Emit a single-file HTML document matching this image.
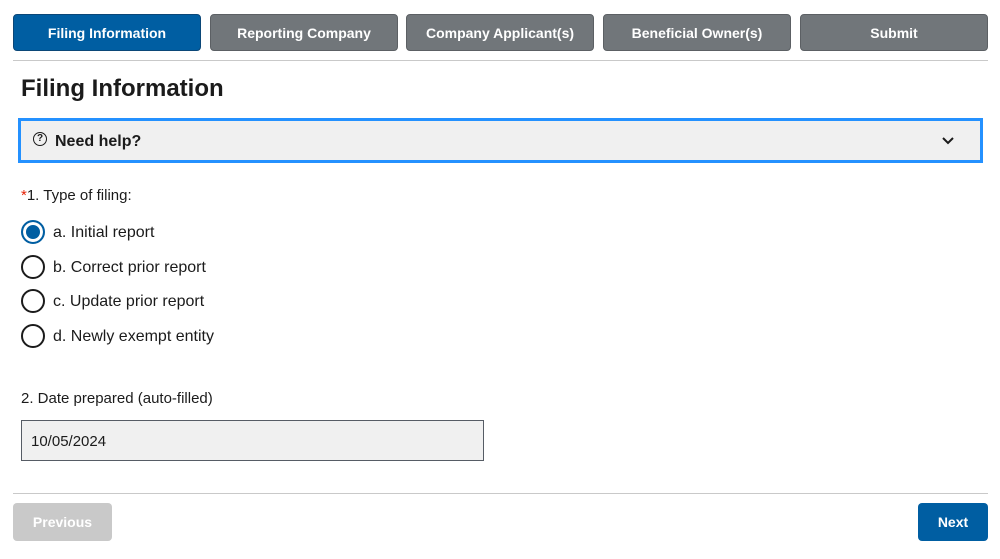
<!DOCTYPE html>
<html><head><style>
*{box-sizing:border-box;margin:0;padding:0}
body{width:1000px;height:559px;background:#fff;font-family:"Liberation Sans",sans-serif;color:#1b1b1b;position:relative;overflow:hidden}
.tab{position:absolute;top:14px;height:37px;border-radius:4px;background:#71767a;color:#fff;font-weight:bold;font-size:14px;display:flex;align-items:center;justify-content:center;border:1px solid #5c6064}
.tab.on{background:#005ea2;border-color:#0b4778}
.hr{position:absolute;left:13px;width:975px;height:1px;background:#c9c9c9}
h1{position:absolute;left:21px;top:75px;font-size:24px;font-weight:bold}
.help{position:absolute;left:18px;top:118px;width:965px;height:45px;border:3px solid #2491ff;background:#f0f0f0;font-weight:bold;font-size:16px;display:flex;align-items:center;padding-left:34px;padding-top:3px}
.q{position:absolute;left:12px;top:11px;width:14px;height:14px;border:1.5px solid #1b1b1b;border-radius:50%;font-size:10px;text-align:center;line-height:11px}
.lbl{position:absolute;left:21px;font-size:15px}
.r{position:absolute;left:21px;width:24px;height:24px;border:2px solid #1b1b1b;border-radius:50%}
.r.on{border-color:#005ea2;box-shadow:inset 0 0 0 3px #fff;background:#005ea2}
.opt{position:absolute;left:53px;font-size:16px}
.inp{position:absolute;left:21px;top:420px;width:463px;height:41px;border:1px solid #565c65;background:#f0f0f0;font-size:15px;padding:12px 9px}
.btn{position:absolute;top:503px;height:38px;border-radius:4px;font-weight:bold;font-size:14px;color:#fff;display:flex;align-items:center;justify-content:center}
</style></head><body>
<div class="tab on" style="left:13px;width:188px">Filing Information</div>
<div class="tab" style="left:210px;width:188px">Reporting Company</div>
<div class="tab" style="left:406px;width:188px">Company Applicant(s)</div>
<div class="tab" style="left:603px;width:188px">Beneficial Owner(s)</div>
<div class="tab" style="left:800px;width:188px">Submit</div>
<div class="hr" style="top:60px"></div>
<h1>Filing Information</h1>
<div class="help"><div class="q">?</div>Need help?
<svg style="position:absolute;right:26px;top:16px" width="12" height="8" viewBox="0 0 12 8"><path d="M1 1l5 5 5-5" fill="none" stroke="#1b1b1b" stroke-width="2"/></svg></div>
<div class="lbl" style="top:187px"><span style="color:#e52207">*</span>1. Type of filing:</div>
<div class="r on" style="top:220px"></div><div class="opt" style="top:224px">a. Initial report</div>
<div class="r" style="top:255px"></div><div class="opt" style="top:259px">b. Correct prior report</div>
<div class="r" style="top:289px"></div><div class="opt" style="top:293px">c. Update prior report</div>
<div class="r" style="top:324px"></div><div class="opt" style="top:328px">d. Newly exempt entity</div>
<div class="lbl" style="top:390px">2. Date prepared (auto-filled)</div>
<div class="inp">10/05/2024</div>
<div class="hr" style="top:493px"></div>
<div class="btn" style="left:13px;width:99px;background:#c9c9c9">Previous</div>
<div class="btn" style="left:918px;width:70px;background:#005ea2">Next</div>
</body></html>
